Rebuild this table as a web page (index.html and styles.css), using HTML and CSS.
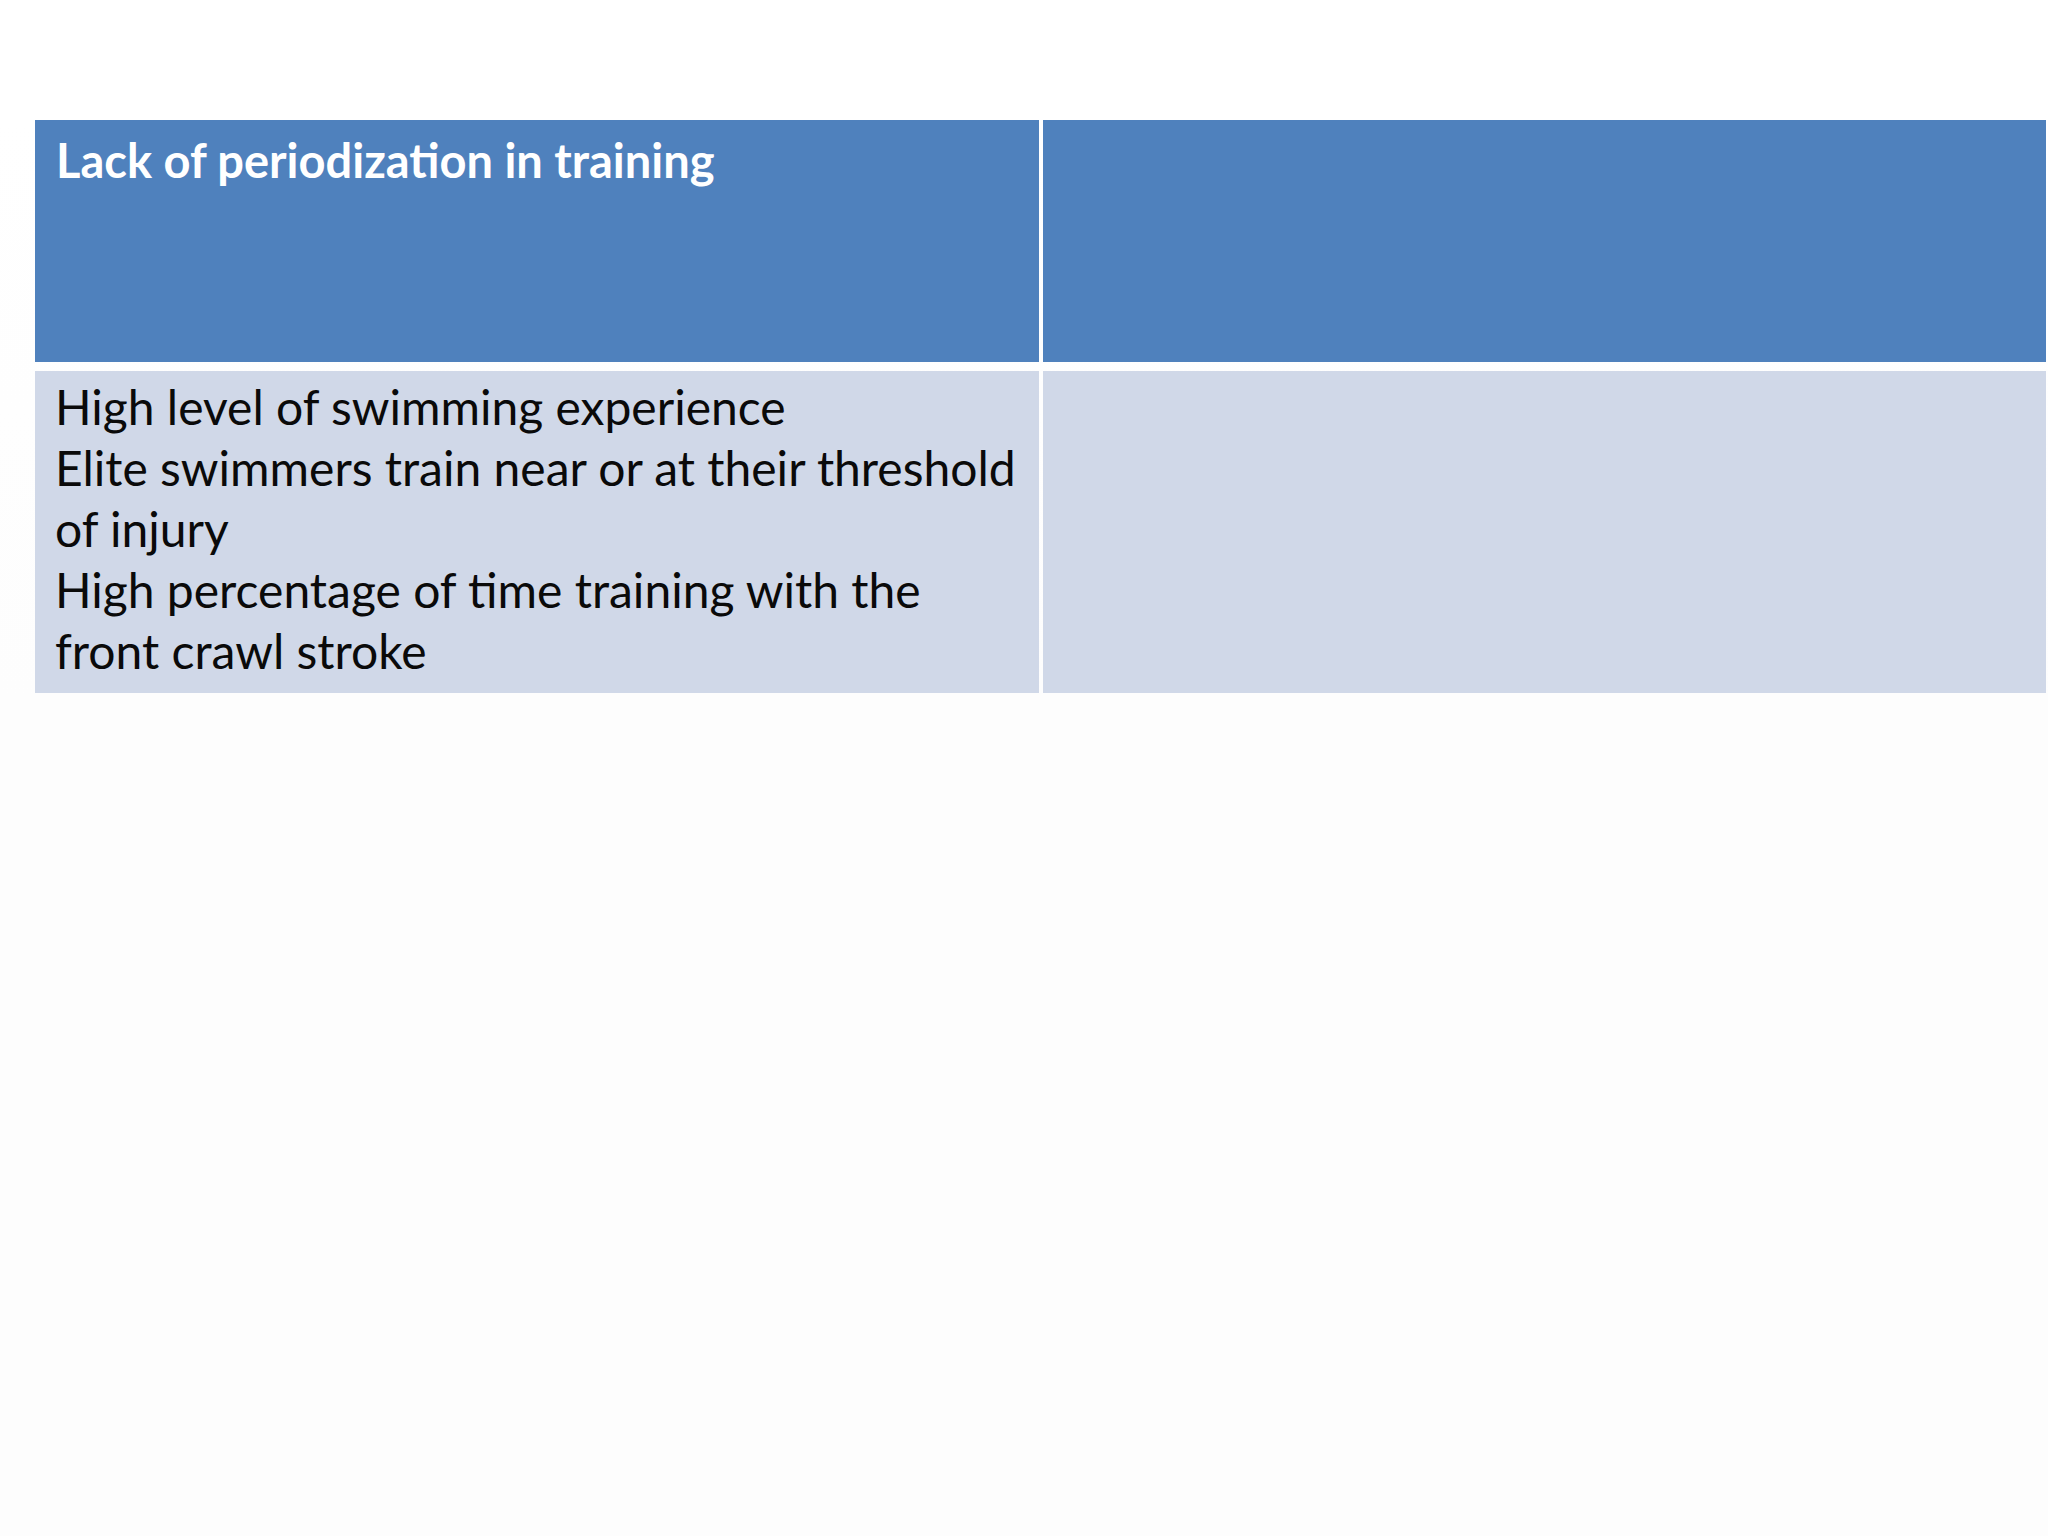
FILE: index.html
```html
<!DOCTYPE html>
<html lang="en">
<head>
<meta charset="utf-8">
<title>Lack of periodization in training</title>
<link rel="stylesheet" href="styles.css">
</head>
<body>
<main class="slide">
  <div class="table">
    <div class="cell head">Lack of periodization in training</div>
    <div class="cell head"></div>
    <div class="cell body">
      <p class="line">High level of swimming experience</p>
      <p class="line">Elite swimmers train near or at their threshold<br>of injury</p>
      <p class="line">High percentage of time training with the<br>front crawl stroke</p>
    </div>
    <div class="cell body"></div>
  </div>
</main>
</body>
</html>
```
FILE: styles.css
```css
html, body {
  margin: 0;
  padding: 0;
  background: #fdfdfd;
}
.slide {
  width: 2048px;
  height: 1536px;
  padding: 120px 2px 0 35px;
  box-sizing: border-box;
  background: linear-gradient(#ffffff 0, #ffffff 120px, #fdfdfd 700px);
}
.table {
  display: grid;
  grid-template-columns: 1004px 1003px;
  grid-template-rows: 242px 322px;
  column-gap: 4px;
  row-gap: 9px;
}
.cell {
  box-sizing: border-box;
  font-family: Lato, "Liberation Sans", sans-serif;
}
.head {
  background: #4f81bd;
  color: #ffffff;
  font-weight: 700;
  font-size: 47px;
  line-height: 58px;
  padding: 11px 20px 0 21px;
}
.body {
  background: #d0d8e8;
  color: #0a0a0a;
  font-size: 48px;
  line-height: 61px;
  padding: 5px 20px 0 20px;
}
.line {
  margin: 0;
  white-space: nowrap;
}
```
